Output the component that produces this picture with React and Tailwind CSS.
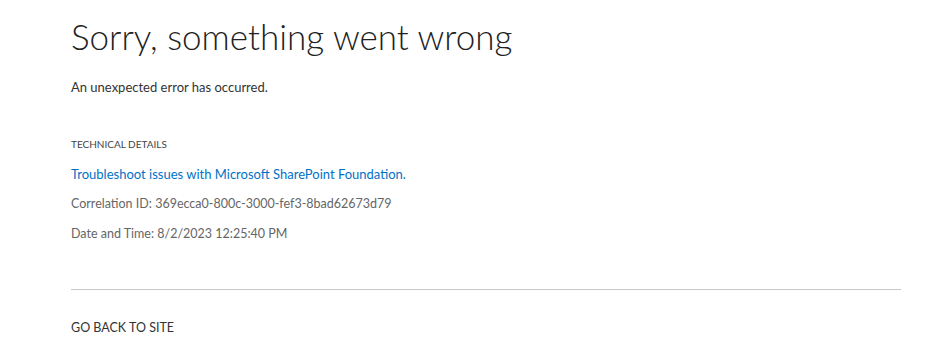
export default function App() {
  return (
    <div className="min-h-[350px] bg-white pl-[71px] pr-[33px] pt-[12px] text-[#333]" style={{ fontFamily: 'Lato, "Open Sans", sans-serif' }}>
      <h1 className="text-[35px] font-light leading-[48px] text-[#222]">Sorry, something went wrong</h1>
      <p className="mt-[18px] text-[13px] leading-[18px] text-[#333]">An unexpected error has occurred.</p>
      <div className="mt-[41px] text-[10px] leading-[14px] uppercase text-[#444]">Technical Details</div>
      <a href="#" className="mt-[14px] block text-[13px] leading-[18px] text-[#0072c6]">Troubleshoot issues with Microsoft SharePoint Foundation.</a>
      <div className="mt-[12px] text-[12.5px] leading-[18px] text-[#666]">Correlation ID: 369ecca0-800c-3000-fef3-8bad62673d79</div>
      <div className="mt-[12px] text-[12.5px] leading-[18px] text-[#666]">Date and Time: 8/2/2023 12:25:40 PM</div>
      <hr className="mt-[46px] w-[830px] border-0 border-t border-[#c8c8c8]" />
      <a href="#" className="mt-[29px] block text-[12.5px] leading-[18px] uppercase text-[#333]">Go back to site</a>
    </div>
  );
}
